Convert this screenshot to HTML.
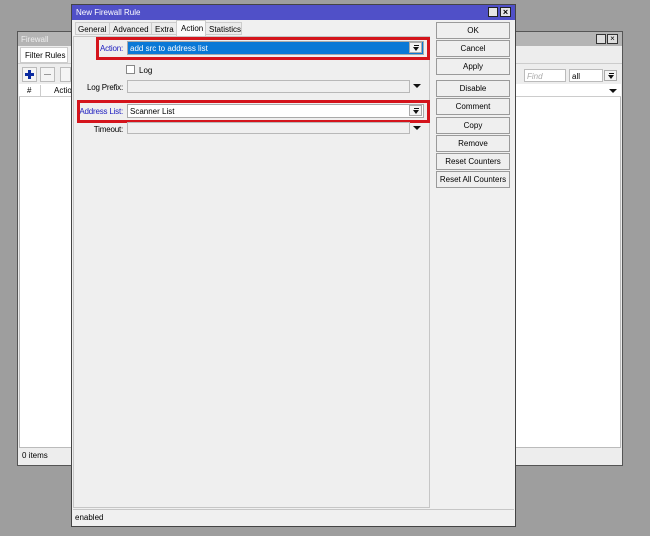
<!DOCTYPE html><html><head><style>
*{box-sizing:border-box;margin:0;padding:0}
body{width:650px;height:536px;background:#9e9e9e;position:relative;overflow:hidden;font-family:"Liberation Sans",sans-serif;font-size:8px;color:#000;white-space:nowrap}
.a{position:absolute}
.btn{position:absolute;left:436px;width:74px;height:17px;background:#efefef;border:1px solid #9a9a9a;text-align:center;line-height:15px;font-size:8px}
.fld{position:absolute;background:#efefef;border:1px solid #b8b8b8}
.lbl{position:absolute;text-align:right;width:72px;font-size:8px;letter-spacing:-0.2px}
.dd{position:absolute;width:13px;height:11px;border:1px solid #aaa;background:#f4f4f4}
.dd:before{content:"";position:absolute;left:4px;top:2px;width:5px;height:1px;background:#111}
.dd:after{content:"";position:absolute;left:3px;top:4px;border-left:3px solid transparent;border-right:3px solid transparent;border-top:4px solid #111}
.tri{position:absolute;width:0;height:0;border-left:4px solid transparent;border-right:4px solid transparent;border-top:4px solid #111}
</style></head><body>
<!-- Firewall window -->
<div class="a" style="left:17px;top:31px;width:606px;height:435px;background:#ededed;border:1px solid #555"></div>
<div class="a" style="left:18px;top:32px;width:604px;height:14px;background:#b4b4b4;color:#eee;font-size:8px;padding:3px 3px">Firewall</div>
<div class="a" style="left:596px;top:34px;width:10px;height:10px;border:1px solid #333;background:#ddd"></div>
<div class="a" style="left:607px;top:34px;width:11px;height:10px;border:1px solid #333;background:#ddd;font-size:8px;line-height:8px;text-align:center">×</div>
<div class="a" style="left:20px;top:47px;width:48px;height:16px;background:#fff;border:1px solid #ccc;padding:3px 4px">Filter Rules</div>
<div class="a" style="left:18px;top:63px;width:604px;height:1px;background:#ccc"></div>
<div class="a" style="left:22px;top:67px;width:15px;height:15px;border:1px solid #bbb;background:#f4f4f4"></div>
<div class="a" style="left:25px;top:73px;width:9px;height:3px;background:#0a2aa0"></div>
<div class="a" style="left:28px;top:70px;width:3px;height:9px;background:#0a2aa0"></div>
<div class="a" style="left:40px;top:67px;width:15px;height:15px;border:1px solid #bbb;background:#f4f4f4"></div>
<div class="a" style="left:44px;top:74px;width:7px;height:1px;background:#999"></div>
<div class="a" style="left:60px;top:67px;width:11px;height:15px;border:1px solid #bbb;background:#f4f4f4"></div>
<div class="a" style="left:524px;top:69px;width:42px;height:13px;background:#fff;border:1px solid #bbb;color:#aaa;font-style:italic;padding:2px 2px">Find</div>
<div class="a" style="left:569px;top:69px;width:34px;height:13px;background:#fff;border:1px solid #bbb;padding:2px 2px">all</div>
<div class="dd" style="left:604px;top:70px"></div>
<div class="a" style="left:19px;top:84px;width:602px;height:364px;background:#fff;border:1px solid #bbb"></div>
<div class="a" style="left:19px;top:84px;width:602px;height:13px;border-bottom:1px solid #ccc;background:#fff"></div>
<div class="a" style="left:27px;top:86px">#</div>
<div class="a" style="left:40px;top:85px;width:1px;height:11px;background:#ccc"></div>
<div class="a" style="left:54px;top:86px">Action</div>
<div class="tri" style="left:609px;top:89px"></div>
<div class="a" style="left:22px;top:451px;font-size:8px">0 items</div>

<!-- New Firewall Rule -->
<div class="a" style="left:71px;top:4px;width:445px;height:523px;background:#f0f0f0;border:1px solid #444"></div>
<div class="a" style="left:72px;top:5px;width:443px;height:15px;background:#5050c8;color:#fff;padding:3px 4px;font-size:8px">New Firewall Rule</div>
<div class="a" style="left:488px;top:7px;width:10px;height:10px;border:1px solid #222;background:#e6e6e6"></div>
<div class="a" style="left:500px;top:7px;width:11px;height:10px;border:1px solid #222;background:#e6e6e6;font-size:9px;line-height:8px;text-align:center;font-weight:bold">×</div>
<div class="a" style="left:75px;top:22px;width:167px;height:13px;border:1px solid #ccc;background:#ececec"></div>
<div class="a" style="left:78px;top:25px">General</div>
<div class="a" style="left:109px;top:22px;width:1px;height:13px;background:#ccc"></div>
<div class="a" style="left:113px;top:25px">Advanced</div>
<div class="a" style="left:151px;top:22px;width:1px;height:13px;background:#ccc"></div>
<div class="a" style="left:155px;top:25px">Extra</div>
<div class="a" style="left:176px;top:20px;width:30px;height:16px;background:#fafafa;border:1px solid #ccc;border-bottom:none;padding:3px 4px">Action</div>
<div class="a" style="left:209px;top:25px">Statistics</div>
<div class="a" style="left:73px;top:36px;width:357px;height:472px;background:#efefef;border:1px solid #c6c6c6"></div>

<div class="a" style="left:96px;top:37px;width:334px;height:23px;border:3px solid #d4141c"></div>
<div class="lbl" style="left:51px;top:44px;color:#2020c0">Action:</div>
<div class="a" style="left:127px;top:41px;width:297px;height:14px;background:#0a78d6;border:1px solid #aaa;color:#fff;padding:2px 2px">add src to address list</div>
<div class="dd" style="left:409px;top:42px"></div>

<div class="a" style="left:126px;top:65px;width:9px;height:9px;border:1px solid #888;background:#fff"></div>
<div class="a" style="left:139px;top:66px">Log</div>
<div class="lbl" style="left:51px;top:83px">Log Prefix:</div>
<div class="fld" style="left:127px;top:80px;width:283px;height:13px"></div>
<div class="tri" style="left:413px;top:84px"></div>

<div class="a" style="left:77px;top:100px;width:353px;height:23px;border:3px solid #d4141c"></div>
<div class="lbl" style="left:51px;top:107px;color:#2020c0">Address List:</div>
<div class="a" style="left:127px;top:104px;width:297px;height:14px;background:#fff;border:1px solid #aaa;padding:2px 2px">Scanner List</div>
<div class="dd" style="left:409px;top:105px"></div>
<div class="lbl" style="left:51px;top:125px">Timeout:</div>
<div class="fld" style="left:127px;top:122px;width:283px;height:12px"></div>
<div class="tri" style="left:413px;top:126px"></div>

<div class="btn" style="top:22px">OK</div>
<div class="btn" style="top:40px">Cancel</div>
<div class="btn" style="top:58px">Apply</div>
<div class="btn" style="top:80px">Disable</div>
<div class="btn" style="top:98px">Comment</div>
<div class="btn" style="top:117px">Copy</div>
<div class="btn" style="top:135px">Remove</div>
<div class="btn" style="top:153px">Reset Counters</div>
<div class="btn" style="top:171px">Reset All Counters</div>

<div class="a" style="left:73px;top:509px;width:441px;height:16px;border-top:1px solid #c6c6c6;padding:3px 2px;font-size:8px">enabled</div>
</body></html>
